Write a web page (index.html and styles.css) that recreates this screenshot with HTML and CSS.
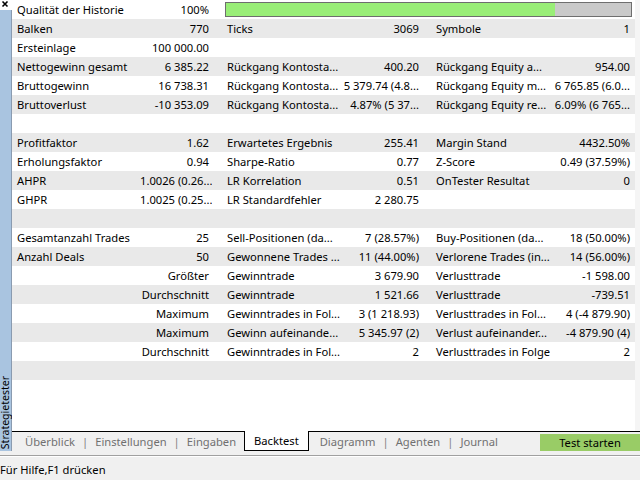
FILE: index.html
```html
<!DOCTYPE html>
<html lang="de">
<head>
<meta charset="utf-8">
<title>Strategietester</title>
<link rel="stylesheet" href="styles.css">
</head>
<body>
<div class="app">
  <div class="main">
    <div class="sidebar">
      <div class="close">
        <svg width="8" height="8" viewBox="0 0 8 8" aria-label="Schließen">
          <path d="M1.5 1.5 L6.5 6.5 M6.5 1.5 L1.5 6.5" stroke="#000" stroke-width="1.6" fill="none"/>
        </svg>
      </div>
      <div class="side-bar-body">
        <span class="side-title">Strategietester</span>
      </div>
    </div>
    <div class="panel">
      <div class="content">
        <div class="table">
          <div class="row">
            <div class="l">Qualität der Historie</div><div class="v">100%</div>
            <div class="barcell"><div class="bar"><div class="fill" style="width:81.3%"></div></div></div>
          </div>
          <div class="row alt">
            <div class="l">Balken</div><div class="v">770</div>
            <div class="l2">Ticks</div><div class="v">3069</div>
            <div class="l3">Symbole</div><div class="v">1</div>
          </div>
          <div class="row">
            <div class="l">Ersteinlage</div><div class="v">100 000.00</div>
            <div class="l2"></div><div class="v"></div>
            <div class="l3"></div><div class="v"></div>
          </div>
          <div class="row alt">
            <div class="l">Nettogewinn gesamt</div><div class="v">6 385.22</div>
            <div class="l2">Rückgang Kontosta...</div><div class="v">400.20</div>
            <div class="l3">Rückgang Equity a...</div><div class="v">954.00</div>
          </div>
          <div class="row">
            <div class="l">Bruttogewinn</div><div class="v">16 738.31</div>
            <div class="l2">Rückgang Kontosta...</div><div class="v">5 379.74 (4.8...</div>
            <div class="l3">Rückgang Equity m...</div><div class="v">6 765.85 (6.0...</div>
          </div>
          <div class="row alt">
            <div class="l">Bruttoverlust</div><div class="v">-10 353.09</div>
            <div class="l2">Rückgang Kontosta...</div><div class="v">4.87% (5 37...</div>
            <div class="l3">Rückgang Equity re...</div><div class="v">6.09% (6 765...</div>
          </div>
          <div class="row"></div>
          <div class="row alt">
            <div class="l">Profitfaktor</div><div class="v">1.62</div>
            <div class="l2">Erwartetes Ergebnis</div><div class="v">255.41</div>
            <div class="l3">Margin Stand</div><div class="v">4432.50%</div>
          </div>
          <div class="row">
            <div class="l">Erholungsfaktor</div><div class="v">0.94</div>
            <div class="l2">Sharpe-Ratio</div><div class="v">0.77</div>
            <div class="l3">Z-Score</div><div class="v">0.49 (37.59%)</div>
          </div>
          <div class="row alt">
            <div class="l">AHPR</div><div class="v">1.0026 (0.26...</div>
            <div class="l2">LR Korrelation</div><div class="v">0.51</div>
            <div class="l3">OnTester Resultat</div><div class="v">0</div>
          </div>
          <div class="row">
            <div class="l">GHPR</div><div class="v">1.0025 (0.25...</div>
            <div class="l2">LR Standardfehler</div><div class="v">2 280.75</div>
            <div class="l3"></div><div class="v"></div>
          </div>
          <div class="row alt"></div>
          <div class="row">
            <div class="l">Gesamtanzahl Trades</div><div class="v">25</div>
            <div class="l2">Sell-Positionen (da...</div><div class="v">7 (28.57%)</div>
            <div class="l3">Buy-Positionen (da...</div><div class="v">18 (50.00%)</div>
          </div>
          <div class="row alt">
            <div class="l">Anzahl Deals</div><div class="v">50</div>
            <div class="l2">Gewonnene Trades ...</div><div class="v">11 (44.00%)</div>
            <div class="l3">Verlorene Trades (in...</div><div class="v">14 (56.00%)</div>
          </div>
          <div class="row">
            <div class="l"></div><div class="v">Größter</div>
            <div class="l2">Gewinntrade</div><div class="v">3 679.90</div>
            <div class="l3">Verlusttrade</div><div class="v">-1 598.00</div>
          </div>
          <div class="row alt">
            <div class="l"></div><div class="v">Durchschnitt</div>
            <div class="l2">Gewinntrade</div><div class="v">1 521.66</div>
            <div class="l3">Verlusttrade</div><div class="v">-739.51</div>
          </div>
          <div class="row">
            <div class="l"></div><div class="v">Maximum</div>
            <div class="l2">Gewinntrades in Fol...</div><div class="v">3 (1 218.93)</div>
            <div class="l3">Verlusttrades in Fol...</div><div class="v">4 (-4 879.90)</div>
          </div>
          <div class="row alt">
            <div class="l"></div><div class="v">Maximum</div>
            <div class="l2">Gewinn aufeinande...</div><div class="v">5 345.97 (2)</div>
            <div class="l3">Verlust aufeinander...</div><div class="v">-4 879.90 (4)</div>
          </div>
          <div class="row">
            <div class="l"></div><div class="v">Durchschnitt</div>
            <div class="l2">Gewinntrades in Fol...</div><div class="v">2</div>
            <div class="l3">Verlusttrades in Folge</div><div class="v">2</div>
          </div>
          <div class="row alt"></div>
        </div>
        <div class="rightstrip"></div>
      </div>
      <div class="tabs">
        <span class="tab">Überblick</span><span class="sep">|</span>
        <span class="tab">Einstellungen</span><span class="sep">|</span>
        <span class="tab">Eingaben</span>
        <span class="tab active">Backtest</span>
        <span class="tab">Diagramm</span><span class="sep">|</span>
        <span class="tab">Agenten</span><span class="sep">|</span>
        <span class="tab">Journal</span>
        <span class="spacer"></span>
        <span class="start">Test starten</span>
      </div>
    </div>
  </div>
  <div class="status">Für Hilfe,F1 drücken</div>
</div>
</body>
</html>
```

FILE: styles.css
```css
* { box-sizing: border-box; }
html, body { margin: 0; padding: 0; }
body {
  width: 640px;
  height: 480px;
  overflow: hidden;
  font-family: "Noto Sans", "Segoe UI", sans-serif;
  font-size: 11.2px;
  color: #000;
  background: #f0f0f0;
}
.app { width: 640px; height: 480px; display: flex; flex-direction: column; }
.main { height: 451px; flex: none; display: flex; }

.sidebar {
  width: 12px;
  display: flex;
  flex-direction: column;
  background: #fff;
}
.close {
  height: 10px;
  padding: 0 0 0 1px;
}
.close svg { display: block; }
.side-bar-body {
  flex: 1;
  background: #a9c4e0;
  border-right: 1px solid #8a9bb0;
  display: flex;
  flex-direction: column;
  justify-content: flex-end;
  align-items: center;
}
.side-title {
  writing-mode: vertical-rl;
  transform: rotate(180deg);
  font-size: 10.5px;
  line-height: 11px;
  padding: 2px 0 1px;
}

.panel { flex: 1; display: flex; flex-direction: column; }
.content { flex: 1; display: flex; background: #fff; }
.table { width: 623px; }
.rightstrip { flex: 1; background: #f5f5f5; }

.row {
  height: 19px;
  display: grid;
  grid-template-columns: 128px 72px 130px 80px 128px 85px;
  align-items: center;
  background: #fff;
  white-space: nowrap;
}
.row.alt { background: #e9e9e9; }
.l, .l2, .l3, .v { overflow: hidden; line-height: 19px; }
.l { padding-left: 5px; }
.l2 { padding-left: 15px; }
.l3 { padding-left: 14px; }
.v { text-align: right; padding-right: 3px; }
.row .v:last-child { padding-right: 5px; }

.barcell { grid-column: 3 / 7; padding: 0 3px 0 13px; }
.bar {
  height: 15px;
  border: 1px solid #6e6e6e;
  background: #c9c9c9;
}
.fill { height: 100%; background: #99ee77; }

.tabs {
  height: 20px;
  border-top: 1px solid #000;
  background: #f0f0f0;
  display: flex;
  align-items: stretch;
  padding-left: 13px;
  color: #707070;
  white-space: nowrap;
}
.tab { line-height: 19px; }
.sep { line-height: 19px; padding: 0 7px; color: #808080; }
.tab.active {
  background: #fff;
  color: #000;
  border: 1px solid #000;
  border-top: none;
  padding: 0 9px;
  margin: -1px 11px 0 8px;
  line-height: 19px;
  height: 20px;
}
.spacer { flex: 1; }
.start {
  width: 100px;
  margin-top: 2px;
  background: #99cc66;
  color: #000;
  text-align: center;
  line-height: 17px;
}

.status {
  flex: 1;
  margin-top: 4px;
  border-top: 1px solid #a0a0a0;
  box-shadow: inset 0 1px 0 #fff;
  padding: 4px 0 0 0;
  line-height: 20px;
}
```
